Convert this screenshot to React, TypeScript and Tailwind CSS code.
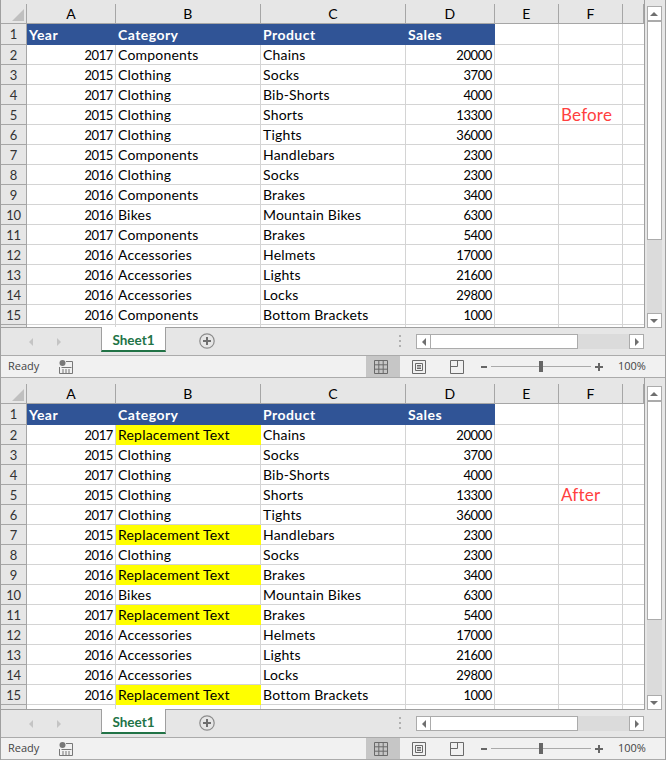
import React from "react";

const rows: [number, string, string, number][] = [
  [2017, "Components", "Chains", 20000],
  [2015, "Clothing", "Socks", 3700],
  [2017, "Clothing", "Bib-Shorts", 4000],
  [2015, "Clothing", "Shorts", 13300],
  [2017, "Clothing", "Tights", 36000],
  [2015, "Components", "Handlebars", 2300],
  [2016, "Clothing", "Socks", 2300],
  [2016, "Components", "Brakes", 3400],
  [2016, "Bikes", "Mountain Bikes", 6300],
  [2017, "Components", "Brakes", 5400],
  [2016, "Accessories", "Helmets", 17000],
  [2016, "Accessories", "Lights", 21600],
  [2016, "Accessories", "Locks", 29800],
  [2016, "Components", "Bottom Brackets", 1000],
];

const gridCols = "grid grid-cols-[26px_89px_145px_145px_89px_64px_64px_21px]";
const cell = "h-5 border-r border-b border-[#d4d4d4] px-[2px] leading-[20px] whitespace-nowrap";
const num = "text-right text-[13px] tracking-[-0.4px]";

function ColHead({ label }: { label: string }) {
  return (
    <div className="h-5 border-r border-b border-[#a6a6a6] bg-[#e6e6e6] text-center leading-[19px] text-black">
      {label}
    </div>
  );
}

function RowHead({ n, tall }: { n: number; tall?: boolean }) {
  return (
    <div
      className={`${tall ? "h-[21px] leading-[21px]" : "h-5 leading-[20px]"} border-r border-b border-[#a6a6a6] bg-[#e6e6e6] text-center text-[13px] tracking-[-0.2px] text-[#333]`}
    >
      {n}
    </div>
  );
}

function Sheet({ replaced, note }: { replaced: boolean; note: string }) {
  return (
    <div className={`${gridCols} font-['Lato','Liberation_Sans',sans-serif] text-[14px] tracking-[0.2px] text-black`}>
      <div className="relative h-5 border-r border-b border-[#a6a6a6] bg-[#e6e6e6]">
        <svg width="14" height="14" className="absolute top-[4px] left-[10px]">
          <polygon points="13,1 13,13 1,13" fill="#bfbfbf" />
        </svg>
      </div>
      {["A", "B", "C", "D", "E", "F", ""].map((c, i) => (
        <ColHead key={i} label={c} />
      ))}
      <RowHead n={1} tall />
      {["Year", "Category", "Product", "Sales"].map((h) => (
        <div
          key={h}
          className="h-[21px] border-r border-b border-[#305496] bg-[#305496] px-[2px] leading-[21px] font-bold tracking-[0.45px] text-white"
        >
          {h}
        </div>
      ))}
      <div className="h-[21px] border-r border-b border-[#d4d4d4]" />
      <div className="h-[21px] border-r border-b border-[#d4d4d4]" />
      <div className="h-[21px] border-b border-[#d4d4d4]" />
      {rows.map((r, i) => {
        const yellow = replaced && r[1] === "Components";
        return (
          <React.Fragment key={i}>
            <RowHead n={i + 2} />
            <div className={`${cell} ${num}`}>{r[0]}</div>
            <div className={yellow ? "h-5 bg-[#ffff00] px-[2px] leading-[20px] whitespace-nowrap" : cell}>
              {yellow ? "Replacement Text" : r[1]}
            </div>
            <div className={cell}>{r[2]}</div>
            <div className={`${cell} ${num}`}>{r[3]}</div>
            <div className={cell} />
            <div className={`${cell} ${i === 3 ? "text-[17px] leading-[19px] text-[#ff4040]" : ""}`}>{i === 3 ? note : ""}</div>
            <div className="h-5 border-b border-[#d4d4d4]" />
          </React.Fragment>
        );
      })}
      <div className="h-5 border-r border-[#a6a6a6] bg-[#e6e6e6]" />
      <div className="h-5 border-r border-[#d4d4d4]" />
      <div className="h-5 border-r border-[#d4d4d4]" />
      <div className="h-5 border-r border-[#d4d4d4]" />
      <div className="h-5 border-r border-[#d4d4d4]" />
      <div className="h-5 border-r border-[#d4d4d4]" />
      <div className="h-5 border-r border-[#d4d4d4]" />
      <div className="h-5" />
    </div>
  );
}

function Arrow({ dir, color = "#6f6f6f" }: { dir: "up" | "down" | "left" | "right"; color?: string }) {
  const pts = {
    up: "1,7 9,7 5,3",
    down: "1,3 9,3 5,7",
    left: "7,1 7,9 3,5",
    right: "3,1 3,9 7,5",
  }[dir];
  return (
    <svg width="10" height="10">
      <polygon points={pts} fill={color} />
    </svg>
  );
}

function ScrollBtn({ dir, className = "" }: { dir: "up" | "down" | "left" | "right"; className?: string }) {
  return (
    <div className={`flex h-[15px] w-[15px] shrink-0 items-center justify-center border border-[#ababab] bg-white ${className}`}>
      <Arrow dir={dir} />
    </div>
  );
}

function Window({ pad, gridH, thumb, replaced, note }: { pad: string; gridH: string; thumb: string; replaced: boolean; note: string }) {
  return (
    <div className="flex flex-col border-x border-[#9f9f9f] bg-[#e6e6e6]">
      <div className={`flex ${gridH}`}>
        <div className="flex w-[644px] shrink-0 flex-col overflow-hidden border-r border-b border-[#9f9f9f]">
          <div className={pad} />
          <div className="min-h-0 flex-1 overflow-hidden bg-white">
            <Sheet replaced={replaced} note={note} />
          </div>
        </div>
        <div className="flex flex-1 flex-col items-center pr-[2px]">
          <div className={`${pad} shrink-0`} />
          <div className="h-[2px] shrink-0" />
          <ScrollBtn dir="up" />
          <div className="min-h-0 w-[15px] flex-1 bg-[#dbdbdb]">
            <div className={`${thumb} w-[15px] border border-[#ababab] bg-white`} />
          </div>
          <ScrollBtn dir="down" />
        </div>
      </div>
      <div className="flex h-[27px] items-start">
        <div className="flex h-[27px] w-[100px] items-center pl-[25px]">
          <Arrow dir="left" color="#c4c4c4" />
          <div className="w-[18px]" />
          <Arrow dir="right" color="#c4c4c4" />
        </div>
        <div className="-mt-px flex h-[25px] w-[65px] items-center justify-center border-x border-b-2 border-x-[#9f9f9f] border-b-[#217346] bg-white pt-[3px] font-['Lato','Liberation_Sans',sans-serif] text-[13.5px] font-bold text-[#217346]">
          Sheet1
        </div>
        <svg width="16" height="16" viewBox="0 0 16 16" className="mt-[5px] ml-[33px]">
          <circle cx="8" cy="8" r="7.2" fill="none" stroke="#8c8c8c" strokeWidth="1.2" />
          <path d="M8 4v8M4 8h8" stroke="#6f6f6f" strokeWidth="2" />
        </svg>
        <div className="mt-[7px] ml-[184px] flex h-[12px] w-[2px] flex-col justify-between">
          <div className="h-[2px] w-[2px] bg-[#b0b0b0]" />
          <div className="h-[2px] w-[2px] bg-[#b0b0b0]" />
          <div className="h-[2px] w-[2px] bg-[#b0b0b0]" />
        </div>
        <div className="mt-[6px] ml-[15px] flex">
          <ScrollBtn dir="left" />
          <div className="h-[15px] w-[147px] border-y border-r border-[#ababab] bg-white" />
          <div className="h-[15px] w-[51px] bg-[#dbdbdb]" />
          <ScrollBtn dir="right" />
        </div>
      </div>
      <div className="flex h-[23px] items-center border-y border-[#ababab] bg-[#f1f1f1] font-['Open_Sans','Liberation_Sans',sans-serif] text-[11px] text-[#444]">
        <span className="ml-[7px] w-[51px]">Ready</span>
        <svg width="14" height="14" viewBox="0 0 14 14">
          <circle cx="3.5" cy="3" r="3" fill="#777" />
          <path d="M7 1.5h6.5v12H.5V7" fill="none" stroke="#777" />
          <path d="M2.5 7h10v1h-10zM3 9.5h2v1H3zM6 9.5h2v1H6zM9 9.5h2v1H9zM3 11.5h2v1H3zM6 11.5h2v1H6zM9 11.5h2v1H9z" fill="#777" />
        </svg>
        <div className="ml-[293px] flex h-[21px] w-[34px] items-center bg-[#c6c6c6] pl-[8px]">
          <svg width="14" height="14" viewBox="0 0 14 14">
            <path d="M.5.5h13v13H.5zM.5 4.8h13M.5 9.2h13M4.8.5v13M9.2.5v13" fill="none" stroke="#6a6a6a" />
          </svg>
        </div>
        <svg width="14" height="14" viewBox="0 0 14 14" className="ml-[12px]">
          <path d="M.5.5h13v13H.5z" fill="none" stroke="#6a6a6a" />
          <path d="M3.5 3.5h7v7h-7zM5 5.5h4M5 7h4M5 8.5h4" fill="none" stroke="#6a6a6a" />
        </svg>
        <svg width="14" height="14" viewBox="0 0 14 14" className="ml-[24px]">
          <path d="M.5.5h13v13H.5zM.5 6.5h7V.5" fill="none" stroke="#6a6a6a" />
        </svg>
        <div className="ml-[17px] h-[2px] w-[6px] bg-[#666]" />
        <div className="relative ml-[4px] h-px w-[100px] bg-[#aaa]">
          <div className="absolute top-[-5px] left-[48px] h-[11px] w-[4px] bg-[#666]" />
        </div>
        <svg width="8" height="8" viewBox="0 0 8 8" className="ml-[4px]">
          <path d="M4 0v8M0 4h8" stroke="#666" strokeWidth="2" />
        </svg>
        <span className="ml-[15px]">100%</span>
      </div>
    </div>
  );
}

export default function App() {
  return (
    <div className="flex h-[761px] w-[666px] flex-col overflow-hidden bg-white">
      <Window pad="h-[4px]" gridH="h-[328px]" thumb="h-[219px]" replaced={false} note="Before" />
      <Window pad="h-[6px]" gridH="h-[332px]" thumb="h-[219px]" replaced={true} note="After" />
    </div>
  );
}
